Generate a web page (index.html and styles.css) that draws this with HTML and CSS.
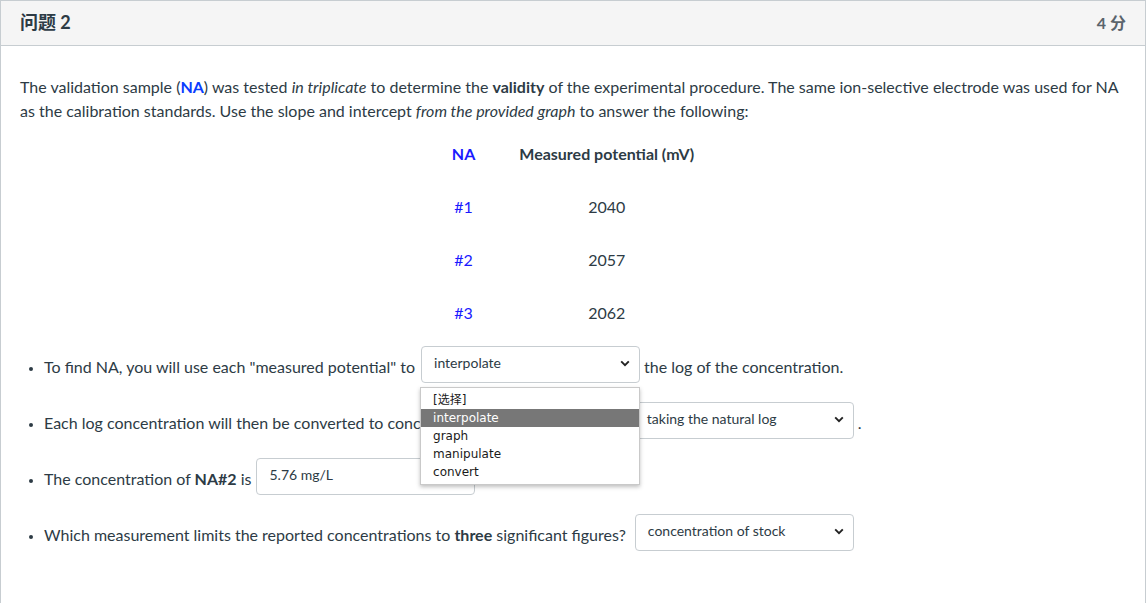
FILE: index.html
```html
<!DOCTYPE html>
<html lang="zh">
<head>
<meta charset="utf-8">
<title>问题 2</title>
<link rel="stylesheet" href="styles.css">
</head>
<body>
<div class="question">
  <div class="q-header">
    <span class="q-title">问题 2</span>
    <span class="q-points">4 分</span>
  </div>
  <div class="q-body">
    <p class="intro">The validation sample (<span class="blue">NA</span>) was tested <em>in triplicate</em> to determine the <strong>validity</strong> of the experimental procedure. The same ion-selective electrode was used for NA as the calibration standards. Use the slope and intercept <em>from the provided graph</em> to answer the following:</p>
    <table class="data">
      <thead>
        <tr><th class="blue">NA</th><th>Measured potential (mV)</th></tr>
      </thead>
      <tbody>
        <tr><td class="blue">#1</td><td>2040</td></tr>
        <tr><td class="blue">#2</td><td>2057</td></tr>
        <tr><td class="blue">#3</td><td>2062</td></tr>
      </tbody>
    </table>
    <ul class="items">
      <li>
        <div class="row">
          <span class="txt">To find NA, you will use each "measured potential" to</span>
          <span class="sel-wrap">
            <span class="sel"><span class="sel-text">interpolate</span><svg class="chev" width="10" height="7" viewBox="0 0 10 7"><path d="M1.2 1.3 L5 5.1 L8.8 1.3" fill="none" stroke="#222" stroke-width="1.9"/></svg></span>
            <span class="menu">
              <span class="opt">[选择]</span>
              <span class="opt active">interpolate</span>
              <span class="opt">graph</span>
              <span class="opt">manipulate</span>
              <span class="opt">convert</span>
            </span>
          </span>
          <span class="txt">the log of the concentration.</span>
        </div>
      </li>
      <li>
        <div class="row">
          <span class="txt">Each log concentration will then be converted to concentration into units of mg/L by</span>
          <span class="sel sel-second"><span class="sel-text">taking the natural log</span><svg class="chev" width="10" height="7" viewBox="0 0 10 7"><path d="M1.2 1.3 L5 5.1 L8.8 1.3" fill="none" stroke="#222" stroke-width="1.9"/></svg></span>
          <span class="txt">.</span>
        </div>
      </li>
      <li>
        <div class="row">
          <span class="txt">The concentration of <strong>NA#2</strong> is</span>
          <span class="input">5.76 mg/L</span>
        </div>
      </li>
      <li>
        <div class="row">
          <span class="txt">Which measurement limits the reported concentrations to <strong>three</strong> significant figures?</span>
          <span class="sel sel-last"><span class="sel-text">concentration of stock</span><svg class="chev" width="10" height="7" viewBox="0 0 10 7"><path d="M1.2 1.3 L5 5.1 L8.8 1.3" fill="none" stroke="#222" stroke-width="1.9"/></svg></span>
        </div>
      </li>
    </ul>
  </div>
</div>
</body>
</html>
```

FILE: styles.css
```css
html, body {
  margin: 0;
  padding: 0;
  background: #ffffff;
}
body {
  font-family: Lato, "Noto Sans CJK SC", sans-serif;
  color: #2d3b45;
  font-size: 16px;
}
.question {
  width: 1146px;
  height: 603px;
  box-sizing: border-box;
  border: 1px solid #c7cdd1;
  border-bottom: none;
  position: relative;
}
.q-header {
  height: 45px;
  box-sizing: border-box;
  background: #f5f5f5;
  border-bottom: 1px solid #c7cdd1;
  display: flex;
  align-items: center;
  justify-content: space-between;
  padding: 0 19px 0 19px;
}
.q-title {
  font-size: 18px;
  font-weight: 700;
  color: #2d3b45;
  margin-top: -4px;
}
.q-points {
  font-size: 16px;
  color: #5a646c;
  font-weight: 700;
  margin-top: -2px;
}
.q-body {
  padding: 29px 19px 0 19px;
}
.intro {
  margin: 0;
  line-height: 24px;
}
.blue {
  color: #1a1aff;
}
.intro .blue {
  color: #0a3cff;
  font-weight: 700;
}
.data {
  margin: 4px auto 0 auto;
  border-collapse: collapse;
}
.data th, .data td {
  height: 53px;
  padding: 0 22px;
  text-align: center;
  vertical-align: middle;
}
.data th {
  font-weight: 700;
}
.items {
  margin: 0;
  padding: 0 0 0 24px;
  list-style: disc;
}
.items li {
  height: 56px;
}
.items li::marker {
  font-size: 13px;
}
.row {
  height: 56px;
  display: flex;
  align-items: center;
  white-space: nowrap;
}
.row > span {
  flex: none;
}
.row > .txt {
  margin-bottom: 2px;
}
.sel-wrap {
  position: relative;
  margin: 0 4px 6px 6px;
}
.sel {
  display: inline-flex;
  align-items: center;
  justify-content: space-between;
  box-sizing: border-box;
  width: 219px;
  height: 37px;
  border: 1px solid #c7cdd1;
  border-radius: 4px;
  background: #fff;
  padding: 0 9px 2px 12px;
  font-size: 14px;
  color: #2d3b45;
  margin: 0 4px 6px 5px;
}
.sel-wrap .sel {
  margin: 0;
}
.sel.sel-second {
  margin-left: 0;
  padding-left: 11px;
}
.sel.sel-last {
  margin-left: 9px;
}
.sel-text {
  line-height: 16px;
}
.input {
  display: inline-flex;
  align-items: center;
  box-sizing: border-box;
  width: 219px;
  height: 37px;
  border: 1px solid #c7cdd1;
  border-radius: 4px;
  background: #fff;
  padding: 0 12px 4px 12px;
  font-size: 14px;
  margin: 0 4px 6px 5px;
}
.menu {
  position: absolute;
  left: -1px;
  top: 41px;
  width: 220px;
  box-sizing: border-box;
  background: #fff;
  border: 1px solid #c9c9c9;
  box-shadow: 0 2px 4px rgba(0,0,0,0.25);
  padding: 3px 0 3px 0;
  display: flex;
  flex-direction: column;
  z-index: 5;
  font-family: "DejaVu Sans", "Noto Sans CJK SC", sans-serif;
  font-size: 12px;
  color: #1a1a1a;
}
.opt {
  line-height: 18px;
  height: 18px;
  padding-left: 12px;
}
.opt.active {
  background: #777777;
  color: #ffffff;
}
```
